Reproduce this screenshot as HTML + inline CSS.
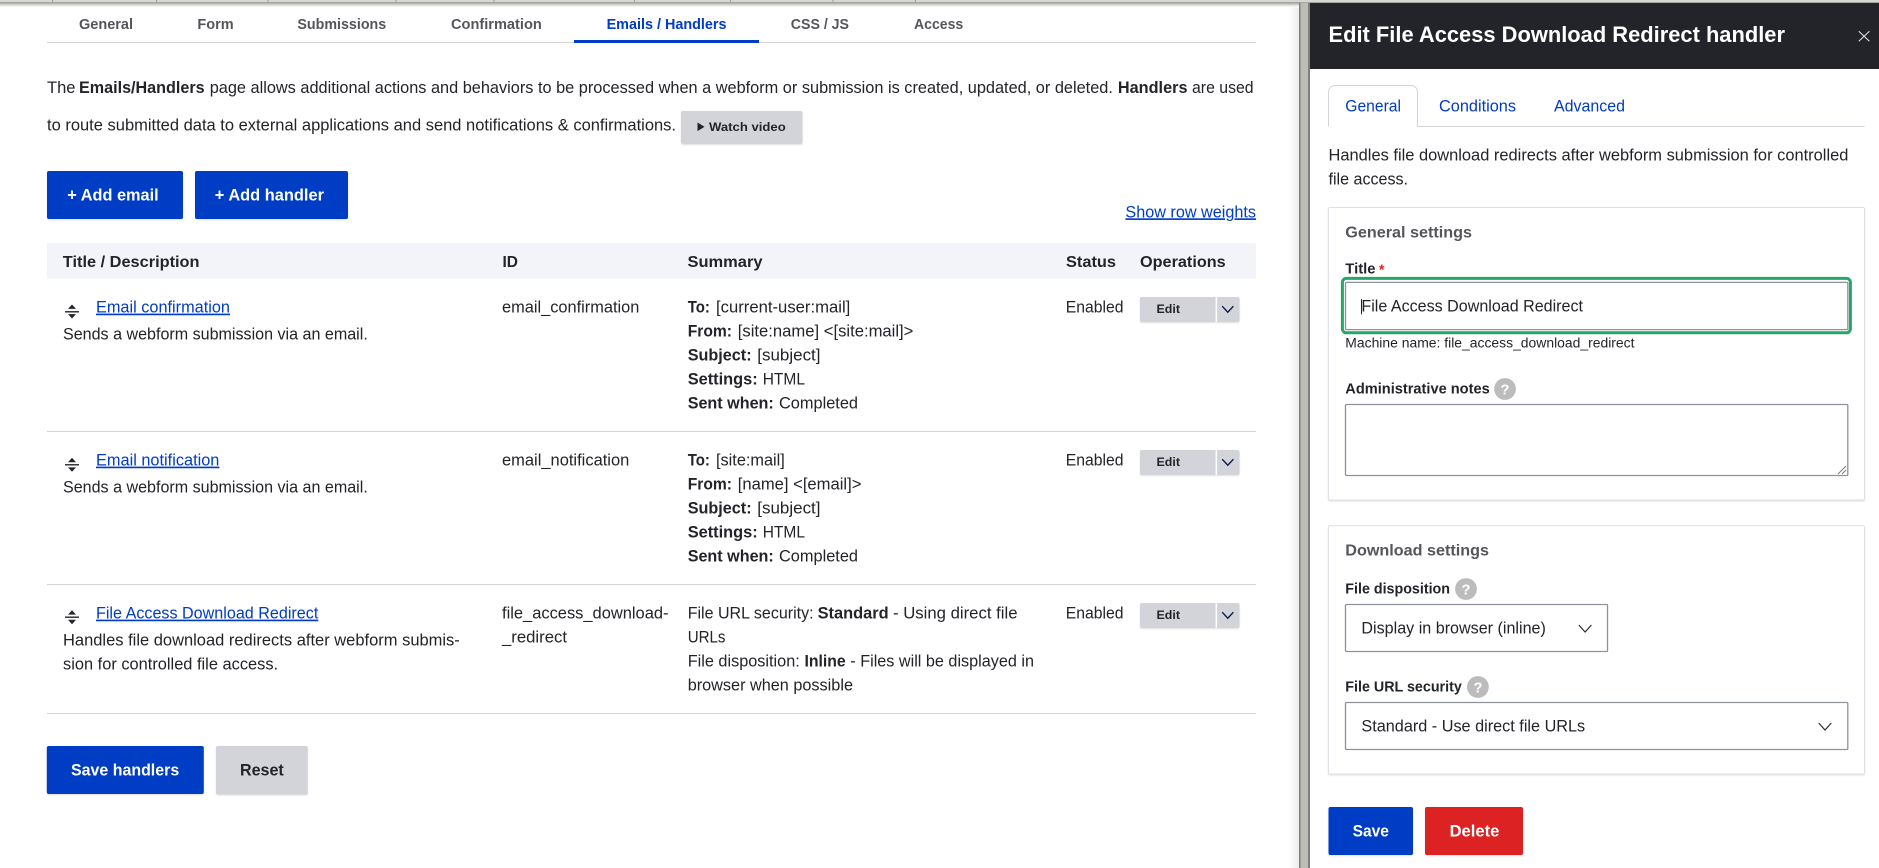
<!DOCTYPE html>
<html lang="en">
<head>
<meta charset="utf-8">
<title>Emails / Handlers</title>
<style>
html,body{margin:0;padding:0;width:1879px;height:868px;overflow:hidden;background:#fff}
svg{display:block;position:absolute;left:0;top:0}
text{font-family:"Liberation Sans",Arial,sans-serif;fill:#232429;font-size:16.5px;transform:translateY(-.7px)}
.b{font-weight:700}
.l{fill:#003cc5}
.u{text-decoration:underline}
.w{fill:#fff;font-weight:700}
.tab{font-size:14.5px;font-weight:700;fill:#55565b;transform:translateY(-.2px)}
.th{font-size:16px;font-weight:700}
.lb{font-size:14.5px;font-weight:700}
.h{font-size:15.5px;font-weight:700;fill:#55565b}
.ed{font-size:12px;font-weight:700}
.btn{font-size:16.5px;font-weight:700}
.q{font-size:15px;font-weight:700;fill:#fff;text-anchor:middle}
.line{fill:#d3d4d9}
.inp{fill:#fff;stroke:#8e929c;stroke-width:1.3}
.ch{fill:none;stroke:#232429;stroke-width:1.1}
.ch2{fill:none;stroke:#0c1a4a;stroke-width:1.4}
.hd{fill:#232429}
</style>
</head>
<body>
<svg width="1879" height="868" viewBox="0 0 1879 868" xmlns="http://www.w3.org/2000/svg">
<defs>
<linearGradient id="top" x1="0" y1="0" x2="0" y2="1"><stop offset="0" stop-color="#9b9c98"/><stop offset=".4" stop-color="#c4c5c1"/><stop offset=".75" stop-color="#f0f0ee"/><stop offset="1" stop-color="#fff"/></linearGradient>
<linearGradient id="side" x1="0" y1="0" x2="1" y2="0"><stop offset="0" stop-color="#fff"/><stop offset="1" stop-color="#ededed"/></linearGradient>
<filter id="s" x="-5%" y="-5%" width="110%" height="115%"><feDropShadow dx="0" dy="1" stdDeviation=".8" flood-color="#000" flood-opacity=".12"/></filter>
</defs>
<rect width="1879" height="868" fill="#fff"/>
<rect x="1288" y="0" width="11" height="868" fill="url(#side)"/>
<rect x="0" y="0" width="1879" height="2" fill="#d6d6d2"/>
<path d="M52.5 0v2M156.5 0v2M268 0v2M396 0v2M494 0v2M634.5 0v2M730.5 0v2M833 0v2M915.5 0v2" stroke="#999" stroke-width="1"/>
<rect x="0" y="2" width="1879" height="5.5" fill="url(#top)"/>

<!-- primary tabs -->
<text class="tab" x="79" y="29.3" textLength="54" lengthAdjust="spacingAndGlyphs">General</text>
<text class="tab" x="197.4" y="29.3" textLength="36.3" lengthAdjust="spacingAndGlyphs">Form</text>
<text class="tab" x="297.4" y="29.3" textLength="88.8" lengthAdjust="spacingAndGlyphs">Submissions</text>
<text class="tab" x="451" y="29.3" textLength="90.8" lengthAdjust="spacingAndGlyphs">Confirmation</text>
<text class="tab l" x="606.6" y="29.3" textLength="119.9" lengthAdjust="spacingAndGlyphs" style="fill:#003cc5">Emails / Handlers</text>
<text class="tab" x="790.8" y="29.3" textLength="58.2" lengthAdjust="spacingAndGlyphs">CSS / JS</text>
<text class="tab" x="914" y="29.3" textLength="49.2" lengthAdjust="spacingAndGlyphs">Access</text>
<rect class="line" x="47" y="42" width="1209" height="1"/>
<rect x="574" y="40" width="185" height="3" fill="#003cc5"/>

<!-- intro paragraph -->
<text x="47" y="93.5" textLength="28.5" lengthAdjust="spacingAndGlyphs">The</text>
<text class="b" x="79" y="93.5" textLength="125.6" lengthAdjust="spacingAndGlyphs">Emails/Handlers</text>
<text x="209.7" y="93.5" textLength="903.2" lengthAdjust="spacingAndGlyphs">page allows additional actions and behaviors to be processed when a webform or submission is created, updated, or deleted.</text>
<text class="b" x="1117.9" y="93.5" textLength="69.6" lengthAdjust="spacingAndGlyphs">Handlers</text>
<text x="1192" y="93.5" textLength="61.6" lengthAdjust="spacingAndGlyphs">are used</text>
<text x="47" y="131.3" textLength="629" lengthAdjust="spacingAndGlyphs">to route submitted data to external applications and send notifications &amp; confirmations.</text>
<rect x="681" y="111" width="121.5" height="33" rx="2" fill="#d3d4d9" filter="url(#s)"/>
<path d="M697.5 122.5l7 4.3-7 4.3z" fill="#232429"/>
<text class="ed" x="709" y="131.6" textLength="76.7" lengthAdjust="spacingAndGlyphs">Watch video</text>

<!-- add buttons -->
<rect x="47" y="171" width="136" height="48" rx="2" fill="#003cc5" filter="url(#s)"/>
<text class="btn w" x="67.3" y="201" textLength="91.4" lengthAdjust="spacingAndGlyphs">+ Add email</text>
<rect x="195" y="171" width="153" height="48" rx="2" fill="#003cc5" filter="url(#s)"/>
<text class="btn w" x="214.8" y="201" textLength="109.2" lengthAdjust="spacingAndGlyphs">+ Add handler</text>
<text class="l u" x="1125.4" y="218" textLength="130.6" lengthAdjust="spacingAndGlyphs">Show row weights</text>

<!-- table head -->
<rect x="47" y="243" width="1209" height="35.7" fill="#f3f4f9"/>
<text class="th" x="62.8" y="267.7" textLength="136.7" lengthAdjust="spacingAndGlyphs">Title / Description</text>
<text class="th" x="502.5" y="267.7" textLength="15.5" lengthAdjust="spacingAndGlyphs">ID</text>
<text class="th" x="687.5" y="267.7" textLength="75" lengthAdjust="spacingAndGlyphs">Summary</text>
<text class="th" x="1066" y="267.7" textLength="50" lengthAdjust="spacingAndGlyphs">Status</text>
<text class="th" x="1140" y="267.7" textLength="85.7" lengthAdjust="spacingAndGlyphs">Operations</text>

<!-- row 1 -->
<path class="hd" d="M72 304.5l4 4.4h-8zM72 318.5l4-4.4h-8z"/><rect class="hd" x="65" y="311.1" width="14" height="1.4"/>
<text class="l u" x="96" y="313.3" textLength="134" lengthAdjust="spacingAndGlyphs">Email confirmation</text>
<text x="63" y="340.3" textLength="304.8" lengthAdjust="spacingAndGlyphs">Sends a webform submission via an email.</text>
<text x="502" y="313.3" textLength="137.4" lengthAdjust="spacingAndGlyphs">email_confirmation</text>
<text class="b" x="687.7" y="313.3" textLength="22.2" lengthAdjust="spacingAndGlyphs">To:</text>
<text x="716" y="313.3" textLength="134.3" lengthAdjust="spacingAndGlyphs">[current-user:mail]</text>
<text class="b" x="687.7" y="337.3" textLength="44.3" lengthAdjust="spacingAndGlyphs">From:</text>
<text x="737.8" y="337.3" textLength="175.6" lengthAdjust="spacingAndGlyphs">[site:name] &lt;[site:mail]&gt;</text>
<text class="b" x="687.7" y="361.3" textLength="63.9" lengthAdjust="spacingAndGlyphs">Subject:</text>
<text x="757.3" y="361.3" textLength="63.2" lengthAdjust="spacingAndGlyphs">[subject]</text>
<text class="b" x="687.7" y="385.3" textLength="70" lengthAdjust="spacingAndGlyphs">Settings:</text>
<text x="762.7" y="385.3" textLength="42.3" lengthAdjust="spacingAndGlyphs">HTML</text>
<text class="b" x="687.7" y="409.3" textLength="86.1" lengthAdjust="spacingAndGlyphs">Sent when:</text>
<text x="779" y="409.3" textLength="79" lengthAdjust="spacingAndGlyphs">Completed</text>
<text x="1065.8" y="313.3" textLength="57.7" lengthAdjust="spacingAndGlyphs">Enabled</text>
<rect x="1140" y="297" width="99.5" height="25" rx="2" fill="#d3d4d9" filter="url(#s)"/>
<rect x="1215.6" y="297" width="1.5" height="25" fill="#fff"/>
<text class="ed" x="1156.5" y="313.5" textLength="23.5" lengthAdjust="spacingAndGlyphs">Edit</text>
<path class="ch2" d="M1222.2 306.2l5.6 6 5.6-6"/>
<rect class="line" x="47" y="431" width="1209" height="1"/>

<!-- row 2 -->
<path class="hd" d="M72 457.8l4 4.4h-8zM72 471.8l4-4.4h-8z"/><rect class="hd" x="65" y="464.1" width="14" height="1.4"/>
<text class="l u" x="96" y="466.3" textLength="123.4" lengthAdjust="spacingAndGlyphs">Email notification</text>
<text x="63" y="493.3" textLength="304.8" lengthAdjust="spacingAndGlyphs">Sends a webform submission via an email.</text>
<text x="502" y="466.3" textLength="127.3" lengthAdjust="spacingAndGlyphs">email_notification</text>
<text class="b" x="687.7" y="466.3" textLength="22.2" lengthAdjust="spacingAndGlyphs">To:</text>
<text x="716" y="466.3" textLength="68.8" lengthAdjust="spacingAndGlyphs">[site:mail]</text>
<text class="b" x="687.7" y="490.3" textLength="44.3" lengthAdjust="spacingAndGlyphs">From:</text>
<text x="737.8" y="490.3" textLength="123.6" lengthAdjust="spacingAndGlyphs">[name] &lt;[email]&gt;</text>
<text class="b" x="687.7" y="514.3" textLength="63.9" lengthAdjust="spacingAndGlyphs">Subject:</text>
<text x="757.3" y="514.3" textLength="63.2" lengthAdjust="spacingAndGlyphs">[subject]</text>
<text class="b" x="687.7" y="538.3" textLength="70" lengthAdjust="spacingAndGlyphs">Settings:</text>
<text x="762.7" y="538.3" textLength="42.3" lengthAdjust="spacingAndGlyphs">HTML</text>
<text class="b" x="687.7" y="562.3" textLength="86.1" lengthAdjust="spacingAndGlyphs">Sent when:</text>
<text x="779" y="562.3" textLength="79" lengthAdjust="spacingAndGlyphs">Completed</text>
<text x="1065.8" y="466.3" textLength="57.7" lengthAdjust="spacingAndGlyphs">Enabled</text>
<rect x="1140" y="450" width="99.5" height="25" rx="2" fill="#d3d4d9" filter="url(#s)"/>
<rect x="1215.6" y="450" width="1.5" height="25" fill="#fff"/>
<text class="ed" x="1156.5" y="466.5" textLength="23.5" lengthAdjust="spacingAndGlyphs">Edit</text>
<path class="ch2" d="M1222.2 459.2l5.6 6 5.6-6"/>
<rect class="line" x="47" y="584" width="1209" height="1"/>

<!-- row 3 -->
<path class="hd" d="M72 610.2l4 4.4h-8zM72 624.2l4-4.4h-8z"/><rect class="hd" x="65" y="616.5" width="14" height="1.4"/>
<text class="l u" x="96" y="619.3" textLength="222.3" lengthAdjust="spacingAndGlyphs">File Access Download Redirect</text>
<text x="63" y="646.3" textLength="396.8" lengthAdjust="spacingAndGlyphs">Handles file download redirects after webform submis-</text>
<text x="63" y="670.3" textLength="215.1" lengthAdjust="spacingAndGlyphs">sion for controlled file access.</text>
<text x="502" y="619.3" textLength="166.5" lengthAdjust="spacingAndGlyphs">file_access_download-</text>
<text x="502" y="643.3" textLength="65" lengthAdjust="spacingAndGlyphs">_redirect</text>
<text x="687.7" y="619.3" textLength="125.9" lengthAdjust="spacingAndGlyphs">File URL security:</text>
<text class="b" x="817.6" y="619.3" textLength="71" lengthAdjust="spacingAndGlyphs">Standard</text>
<text x="893" y="619.3" textLength="124.5" lengthAdjust="spacingAndGlyphs">- Using direct file</text>
<text x="687.7" y="643.3" textLength="37.8" lengthAdjust="spacingAndGlyphs">URLs</text>
<text x="687.7" y="667.3" textLength="112.1" lengthAdjust="spacingAndGlyphs">File disposition:</text>
<text class="b" x="804.5" y="667.3" textLength="41.2" lengthAdjust="spacingAndGlyphs">Inline</text>
<text x="850.3" y="667.3" textLength="183.7" lengthAdjust="spacingAndGlyphs">- Files will be displayed in</text>
<text x="687.7" y="691.3" textLength="165.3" lengthAdjust="spacingAndGlyphs">browser when possible</text>
<text x="1065.8" y="619.3" textLength="57.7" lengthAdjust="spacingAndGlyphs">Enabled</text>
<rect x="1140" y="603" width="99.5" height="25" rx="2" fill="#d3d4d9" filter="url(#s)"/>
<rect x="1215.6" y="603" width="1.5" height="25" fill="#fff"/>
<text class="ed" x="1156.5" y="619.5" textLength="23.5" lengthAdjust="spacingAndGlyphs">Edit</text>
<path class="ch2" d="M1222.2 612.2l5.6 6 5.6-6"/>
<rect class="line" x="47" y="713" width="1209" height="1"/>

<!-- footer buttons -->
<rect x="46.8" y="746" width="157" height="48" rx="2" fill="#003cc5" filter="url(#s)"/>
<text class="btn w" x="71" y="776" textLength="108.2" lengthAdjust="spacingAndGlyphs">Save handlers</text>
<rect x="216" y="746" width="91.8" height="48.5" rx="2" fill="#d3d4d9" filter="url(#s)"/>
<text class="btn" x="240" y="776" textLength="43.8" lengthAdjust="spacingAndGlyphs">Reset</text>

<!-- divider -->
<rect x="1299" y="3" width="11" height="865" fill="#7f807c"/>
<rect x="1300.5" y="3" width="7.5" height="865" fill="#bcbdb6"/>

<!-- side panel -->
<rect x="1310" y="3" width="569" height="865" fill="#fff"/>
<rect x="1310" y="3" width="569" height="66" fill="#232429"/>
<text class="w" style="font-size:22px" x="1328.5" y="42.7" textLength="456.5" lengthAdjust="spacingAndGlyphs">Edit File Access Download Redirect handler</text>
<path d="M1858.8 31.2l10.6 10M1869.4 31.2l-10.6 10" fill="none" stroke="#e8e8ea" stroke-width="1"/>

<!-- panel tabs -->
<path d="M1328.5 126.5V92a6.5 6.5 0 0 1 6.5-6.5h76a6.5 6.5 0 0 1 6.5 6.5v34.5H1864.8" fill="none" stroke="#d3d4d9" stroke-width="1"/>
<text class="l" x="1345.3" y="112.3" textLength="55.7" lengthAdjust="spacingAndGlyphs">General</text>
<text class="l" x="1439" y="112.3" textLength="77" lengthAdjust="spacingAndGlyphs">Conditions</text>
<text class="l" x="1554" y="112.3" textLength="71" lengthAdjust="spacingAndGlyphs">Advanced</text>
<text x="1328.5" y="161.3" textLength="519.9" lengthAdjust="spacingAndGlyphs">Handles file download redirects after webform submission for controlled</text>
<text x="1328.5" y="185.3" textLength="79.5" lengthAdjust="spacingAndGlyphs">file access.</text>

<!-- general settings -->
<rect x="1328.5" y="207.5" width="536" height="292.5" rx="1.5" fill="#fff" stroke="#e0e1e6" filter="url(#s)"/>
<text class="h" x="1345.3" y="238.3" textLength="126.7" lengthAdjust="spacingAndGlyphs">General settings</text>
<text class="lb" x="1345.3" y="274.3" textLength="30.2" lengthAdjust="spacingAndGlyphs">Title</text>
<text class="b" style="fill:#dc2323;font-size:15px" x="1379" y="275" textLength="5.5" lengthAdjust="spacingAndGlyphs">*</text>
<rect x="1342.4" y="278.4" width="508" height="54.4" rx="4" fill="#fff" stroke="#26a769" stroke-width="3"/>
<rect class="inp" x="1345.5" y="282.4" width="502.3" height="47.2" rx="1"/>
<text x="1361.4" y="312.3" textLength="221.6" lengthAdjust="spacingAndGlyphs">File Access Download Redirect</text>
<rect x="1361" y="299" width="1" height="15.3" fill="#232429"/>
<text style="font-size:13.5px" x="1345.3" y="348" textLength="289.2" lengthAdjust="spacingAndGlyphs">Machine name: file_access_download_redirect</text>
<text class="lb" x="1345.3" y="394.3" textLength="144.4" lengthAdjust="spacingAndGlyphs">Administrative notes</text>
<circle cx="1505" cy="389" r="10.9" fill="#bcbcbc"/><text class="q" x="1505" y="395">?</text>
<rect class="inp" x="1345.5" y="404.5" width="502.3" height="71" rx="1"/>
<path d="M1838 474l8-8M1842 474l4-4" stroke="#777" stroke-width=".9" fill="none"/>

<!-- download settings -->
<rect x="1328.5" y="525.7" width="536" height="248.3" rx="1.5" fill="#fff" stroke="#e0e1e6" filter="url(#s)"/>
<text class="h" x="1345.3" y="556.3" textLength="143.7" lengthAdjust="spacingAndGlyphs">Download settings</text>
<text class="lb" x="1345.3" y="594" textLength="104.7" lengthAdjust="spacingAndGlyphs">File disposition</text>
<circle cx="1466" cy="589" r="10.9" fill="#bcbcbc"/><text class="q" x="1466" y="595">?</text>
<rect class="inp" x="1345.5" y="604.5" width="262" height="47" rx="1"/>
<text x="1361.4" y="634.3" textLength="184.5" lengthAdjust="spacingAndGlyphs">Display in browser (inline)</text>
<path class="ch" d="M1578.8 625l6.3 7 6.3-7"/>
<text class="lb" x="1345.3" y="692" textLength="116.5" lengthAdjust="spacingAndGlyphs">File URL security</text>
<circle cx="1477.9" cy="687" r="10.9" fill="#bcbcbc"/><text class="q" x="1477.9" y="693">?</text>
<rect class="inp" x="1345.5" y="702.5" width="502.3" height="47" rx="1"/>
<text x="1361.4" y="732.3" textLength="223.8" lengthAdjust="spacingAndGlyphs">Standard - Use direct file URLs</text>
<path class="ch" d="M1818.7 723l6.3 7 6.3-7"/>

<!-- panel buttons -->
<rect x="1328.5" y="807" width="84.5" height="48" rx="2" fill="#003cc5" filter="url(#s)"/>
<text class="btn w" x="1352.6" y="837.3" textLength="36.3" lengthAdjust="spacingAndGlyphs">Save</text>
<rect x="1425" y="807" width="98" height="48" rx="2" fill="#dc2323" filter="url(#s)"/>
<text class="btn w" x="1449.6" y="837.3" textLength="49.7" lengthAdjust="spacingAndGlyphs">Delete</text>
</svg>
</body>
</html>
